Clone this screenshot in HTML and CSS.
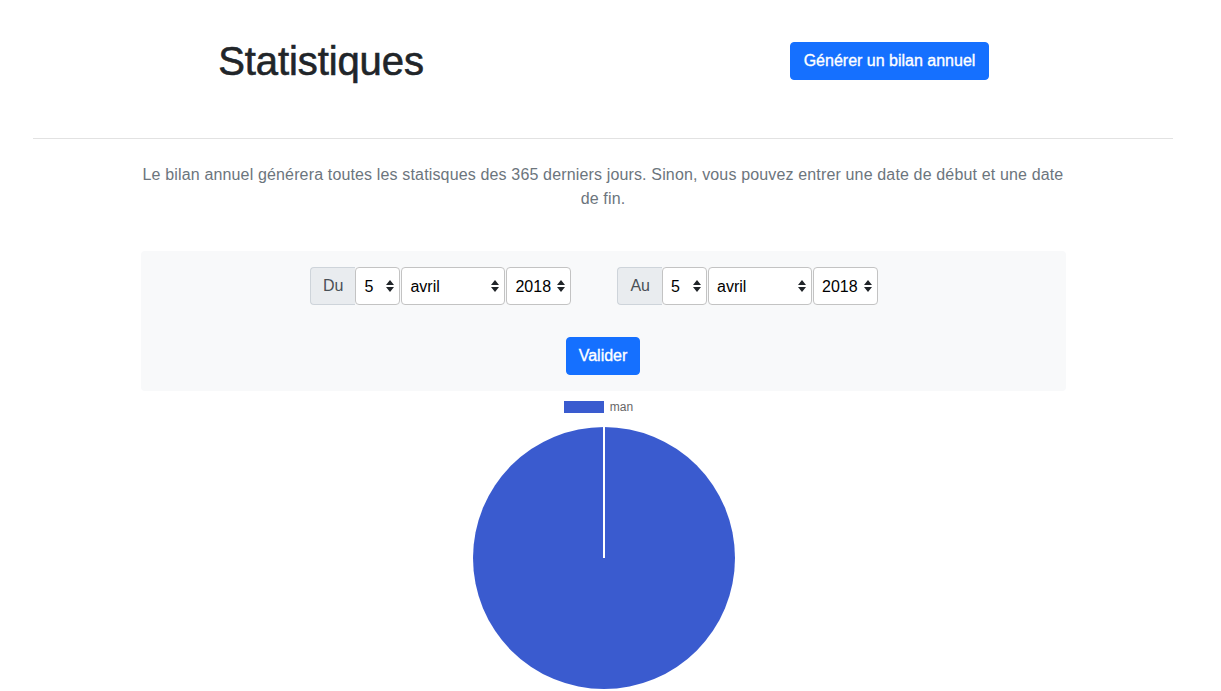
FILE: index.html
```html
<!DOCTYPE html>
<html lang="fr">
<head>
<meta charset="utf-8">
<title>Statistiques</title>
<link rel="stylesheet" href="styles.css">
</head>
<body>
<div class="page">
  <div class="container">
    <div class="row header">
      <div class="col"><h1 class="title">Statistiques</h1></div>
      <div class="col"><button class="btn">Générer un bilan annuel</button></div>
    </div>
    <hr class="sep">
    <p class="lead">Le bilan annuel générera toutes les statisques des 365 derniers jours. Sinon, vous pouvez entrer une date de début et une date de fin.</p>
    <form class="panel">
      <div class="dates">
        <div class="group">
          <span class="addon">Du</span>
          <span class="sel w-day"><select><option>5</option></select><svg class="arr" width="8" height="12" viewBox="0 0 8 12"><path d="M4 0 L8 5 H0 Z M4 12 L0 7 H8 Z" fill="#212529"/></svg></span>
          <span class="sel w-month"><select><option>avril</option></select><svg class="arr" width="8" height="12" viewBox="0 0 8 12"><path d="M4 0 L8 5 H0 Z M4 12 L0 7 H8 Z" fill="#212529"/></svg></span>
          <span class="sel w-year"><select><option>2018</option></select><svg class="arr" width="8" height="12" viewBox="0 0 8 12"><path d="M4 0 L8 5 H0 Z M4 12 L0 7 H8 Z" fill="#212529"/></svg></span>
        </div>
        <div class="group">
          <span class="addon">Au</span>
          <span class="sel w-day"><select><option>5</option></select><svg class="arr" width="8" height="12" viewBox="0 0 8 12"><path d="M4 0 L8 5 H0 Z M4 12 L0 7 H8 Z" fill="#212529"/></svg></span>
          <span class="sel w-month"><select><option>avril</option></select><svg class="arr" width="8" height="12" viewBox="0 0 8 12"><path d="M4 0 L8 5 H0 Z M4 12 L0 7 H8 Z" fill="#212529"/></svg></span>
          <span class="sel w-year"><select><option>2018</option></select><svg class="arr" width="8" height="12" viewBox="0 0 8 12"><path d="M4 0 L8 5 H0 Z M4 12 L0 7 H8 Z" fill="#212529"/></svg></span>
        </div>
      </div>
      <button type="button" class="btn btn-valider">Valider</button>
    </form>
    <div class="chart">
      <div class="legend"><span class="swatch"></span><span class="legend-label">man</span></div>
      <svg class="pie" width="264" height="264" viewBox="0 0 264 264">
        <circle cx="132" cy="132" r="131" fill="#3a5bcf"/>
        <line x1="132" y1="132" x2="132" y2="0" stroke="#ffffff" stroke-width="2"/>
      </svg>
    </div>
  </div>
</div>
</body>
</html>
```
FILE: styles.css
```css
html, body {
  margin: 0;
  padding: 0;
  background: #ffffff;
}
body {
  font-family: "Liberation Sans", Arial, sans-serif;
  color: #212529;
  font-size: 16px;
  line-height: 1.5;
}
.page {
  width: 1206px;
  overflow: hidden;
}
.container {
  width: 1140px;
  margin: 0 auto;
}
.header {
  display: flex;
  align-items: center;
  padding-top: 37px;
}
.col {
  flex: 1 1 0;
  text-align: center;
  padding: 0 15px;
}
.title {
  margin: 0;
  font-size: 40px;
  font-weight: 500;
  line-height: 48px;
  letter-spacing: -0.1px;
  -webkit-text-stroke: 0.6px #212529;
  padding-left: 6px;
}
.btn {
  font-family: inherit;
  font-size: 16px;
  line-height: 24px;
  color: #ffffff;
  background: #1570ff;
  border: 1px solid #1570ff;
  border-radius: 4px;
  padding: 6px 13px;
  cursor: pointer;
  -webkit-text-stroke: 0.35px #ffffff;
}
.header .btn {
  margin-left: 3px;
}
.sep {
  margin: 53px 0 0;
  border: 0;
  border-top: 1px solid #e2e2e2;
  height: 0;
}
.lead {
  width: 925px;
  margin: 24px auto 0;
  text-align: center;
  color: #6c757d;
  font-size: 16px;
  line-height: 24px;
  letter-spacing: 0.15px;
}
.panel {
  width: 925px;
  margin: 40px auto 0;
  background: #f8f9fa;
  border-radius: 4px;
  padding: 16px 0;
  display: flex;
  flex-direction: column;
  align-items: center;
  gap: 32px;
}
.dates {
  display: flex;
  gap: 46px;
  padding-right: 18px;
}
.group {
  display: flex;
  height: 38px;
}
.addon {
  display: flex;
  align-items: center;
  padding: 0 12px;
  background: #e9ecef;
  border: 1px solid #ced4da;
  border-right: 0;
  border-radius: 4px 0 0 4px;
  color: #495057;
  font-size: 16px;
}
.sel {
  position: relative;
  display: block;
  height: 38px;
  margin-right: 1px;
}
.sel select {
  -webkit-appearance: none;
  appearance: none;
  width: 100%;
  height: 38px;
  box-sizing: border-box;
  border: 1px solid #c3c3c3;
  border-radius: 4px;
  background: #ffffff;
  font-family: inherit;
  font-size: 16px;
  color: #000000;
  padding: 0 8px;
  margin: 0;
}
.sel .arr {
  position: absolute;
  right: 6px;
  top: 13px;
  pointer-events: none;
}
.w-day { width: 45px; }
.w-month { width: 104px; }
.w-year { width: 65px; margin-right: 0; }
.btn-valider {
  padding: 6px 12px;
  font-weight: 500;
}
.chart {
  display: flex;
  flex-direction: column;
  align-items: center;
  padding-top: 10px;
}
.legend {
  display: flex;
  align-items: center;
  gap: 6px;
  height: 12px;
  margin-right: 9px;
}
.swatch {
  width: 40px;
  height: 12px;
  background: #3a5bcf;
}
.legend-label {
  font-size: 12px;
  line-height: 12px;
  color: #666666;
}
.pie {
  display: block;
  margin-top: 13px;
  margin-left: 1px;
}
```
